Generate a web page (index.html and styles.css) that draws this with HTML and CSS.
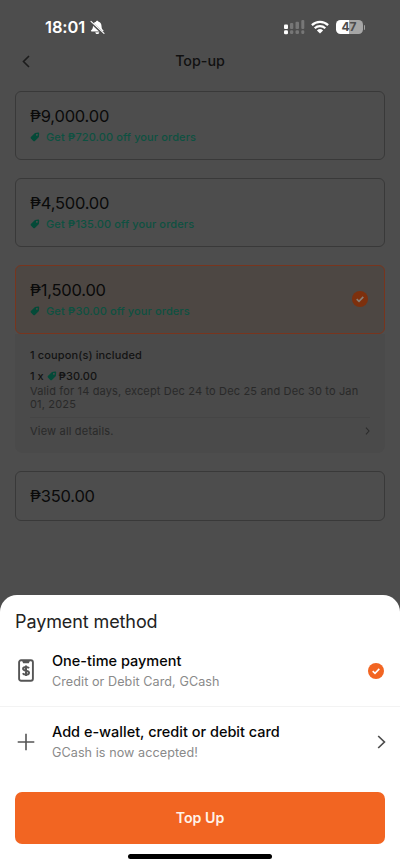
FILE: index.html
```html
<!DOCTYPE html>
<html lang="en">
<head>
<meta charset="utf-8">
<title>Top-up</title>
<link rel="stylesheet" href="styles.css">
</head>
<body>
<svg class="defs" width="0" height="0" aria-hidden="true">
  <symbol id="tag" viewBox="0 0 10 10"><path fill-rule="evenodd" d="M5 .9 8.3.6Q9.2.6 9.2 1.5L8.9 4.9 4.9 9Q4.1 9.7 3.3 9L.9 6.6Q.3 5.9.9 5.1ZM6.9 2a.9.9 0 1 0 .01 0Z"/></symbol>
  <symbol id="check" viewBox="0 0 16 16"><circle cx="8" cy="8" r="8"/><path d="m4.700 8.200 2.300 2.200 4.300-4.500" fill="none" stroke="var(--tick)" stroke-width="1.600"/></symbol>
</svg>
<div class="screen">
  <header class="status">
    <span class="time">18:01</span>
    <svg class="bell" width="15" height="15" viewBox="0 0 15 15"><path fill="#fff" d="M7.2.7c.8 0 1.2.5 1.3 1.1 2 .6 2.9 2 3 4.1.1 2.3.6 3.3 1.8 4.3.5.5.2 1.2-.5 1.2H1.7c-.8 0-1-.7-.5-1.2C2.5 9.100 2.900 8.200 3 5.900c.1-2.100 1-3.500 3-4.100C6 1.200 6.500.7 7.200.7ZM5.300 12.200h4c-.2 1.200-1 1.900-2 1.900s-1.800-.7-2-1.900Z"/><path d="M1 2.300 13.700 14" stroke="#4d4d4d" stroke-width="2.400"/><path d="M1 1.300 14 13.300" stroke="#fff" stroke-width="1.100" stroke-linecap="round"/></svg>
    <svg class="signal" width="21" height="15" viewBox="0 0 21 15"><g fill="#fff"><rect y="4.500" width="4" height="4.500" rx="1"/><rect y="10.300" width="4" height="4" rx="1.300"/></g><g fill="#777"><rect x="6" y="3" width="3.300" height="6" rx="1"/><rect x="11.500" y="1.700" width="3.500" height="7.300" rx="1"/><rect x="17.300" y="0" width="3" height="9" rx="1"/><rect x="6" y="10.300" width="3.300" height="3.700" rx="1.300"/><rect x="11.500" y="10.300" width="3.500" height="3.700" rx="1.300"/><rect x="17.300" y="10.300" width="3" height="3.700" rx="1.300"/></g></svg>
    <svg class="wifi" width="18" height="14" viewBox="0 0 18 14"><g fill="none" stroke="#fff" stroke-width="2.200"><path d="M.9 5.100a11.700 11.700 0 0 1 16.200 0"/><path d="M3.700 8.300a7.700 7.700 0 0 1 10.600 0"/></g><path fill="#fff" d="M5.900 10.400a4.500 4.500 0 0 1 6.200 0L9 13.400Z"/></svg>
    <span class="battery"><span class="cell">47</span><i></i></span>
  </header>
  <nav class="nav">
    <svg class="back" width="8" height="13" viewBox="0 0 8 13"><path d="M7 1 1.500 6.500 7 12" fill="none" stroke="#1c1c1c" stroke-width="1.600"/></svg>
    <h1>Top-up</h1>
  </nav>
  <main class="plans">
    <section class="card"><div class="amount">₱9,000.00</div><div class="offer"><svg class="tag"><use href="#tag"/></svg>Get ₱720.00 off your orders</div></section>
    <section class="card"><div class="amount">₱4,500.00</div><div class="offer"><svg class="tag"><use href="#tag"/></svg>Get ₱135.00 off your orders</div></section>
    <div class="group">
      <section class="card selected"><div><div class="amount">₱1,500.00</div><div class="offer"><svg class="tag"><use href="#tag"/></svg>Get ₱30.00 off your orders</div></div><svg class="check"><use href="#check"/></svg></section>
      <div class="coupon">
        <div class="included">1 coupon(s) included</div>
        <div class="voucher">1 x <svg class="tag"><use href="#tag"/></svg>₱30.00</div>
        <div class="valid">Valid for 14 days, except Dec 24 to Dec 25 and Dec 30 to Jan<br>01, 2025</div>
        <div class="details"><span>View all details.</span><svg width="5" height="8" viewBox="0 0 5 8"><path d="m1 .7 3 3.300-3 3.300" fill="none" stroke="#2b2b2b" stroke-width="1.100"/></svg></div>
      </div>
    </div>
    <section class="card small"><div class="amount">₱350.00</div></section>
  </main>
  <section class="sheet">
    <h2>Payment method</h2>
    <div class="method">
      <svg class="lead" width="16" height="23" viewBox="0 0 16 23"><rect x="1.100" y="1.300" width="13.800" height="20.400" rx="2" fill="none" stroke="#555" stroke-width="1.900"/><path d="M4 1.500h8l-1.200 2.700H5.200Z" fill="#555"/><path d="M11 9.200C10.400 8.300 9.400 8 8 8c-1.800 0-2.900.7-2.900 1.800 0 2.700 5.900 1.100 5.900 3.900 0 1.200-1.200 1.900-3 1.900-1.500 0-2.600-.4-3.200-1.400M8 6.500v10.600" fill="none" stroke="#555" stroke-width="2"/></svg>
      <div class="label"><div class="name">One-time payment</div><div class="note">Credit or Debit Card, GCash</div></div>
      <svg class="check"><use href="#check"/></svg>
    </div>
    <div class="method second">
      <svg class="lead plus" width="18" height="18" viewBox="0 0 18 18"><path d="M9 .7v16.600M.7 9h16.600" stroke="#555" stroke-width="1.600"/></svg>
      <div class="label"><div class="name add">Add e-wallet, credit or debit card</div><div class="note">GCash is now accepted!</div></div>
      <svg class="next" width="9" height="14" viewBox="0 0 9 14"><path d="m1.200 1 6.200 6-6.200 6" fill="none" stroke="#4c4c4c" stroke-width="1.700"/></svg>
    </div>
    <button class="cta">Top Up</button>
    <div class="home"></div>
  </section>
</div>
</body>
</html>
```

FILE: styles.css
```css
* { box-sizing: border-box; }
body { margin: 0; font-family: Inter, "Liberation Sans", sans-serif; }
.defs { position: absolute; }
svg { display: block; flex: none; }
.screen { width: 400px; height: 866px; background: #4d4d4d; display: flex; flex-direction: column; overflow: hidden; }

.status { height: 46px; padding: 17px 34px 9px 45px; display: flex; align-items: center; color: #fff; flex: none; }
.time { font-size: 16.5px; font-weight: 600; letter-spacing: -0.1px; line-height: 20px; width: 45px; white-space: nowrap; }
.signal { margin-left: auto; }
.wifi { margin-left: 6px; }
.battery { margin-left: 7px; display: flex; align-items: center; }
.cell { width: 27px; height: 14px; border-radius: 4.5px; background: linear-gradient(90deg, #fff 47%, #a6a6a6 47%); color: #4d4d4d; font-size: 12px; font-weight: 700; line-height: 14px; text-align: center; }
.battery i { width: 1.5px; height: 5px; margin: 0 1px; border-radius: 0 2px 2px 0; background: #a0a0a0; }

.nav { height: 45px; padding: 0 22px 15px; display: flex; align-items: center; flex: none; }
.nav h1 { margin: 0 auto; padding-right: 8px; font-size: 14.3px; line-height: 18px; font-weight: 500; color: #111; }

.plans { padding: 0 15px; display: flex; flex-direction: column; gap: 18px; flex: none; height: 504px; }
.card { height: 69px; border: 1px solid #393939; border-radius: 6px; padding: 12px 14px 0; flex: none; }
.card.small { height: 50px; }
.amount { font-size: 16.5px; line-height: 24px; font-weight: 400; letter-spacing: -0.22px; color: #0a0a0a; white-space: nowrap; }
.offer { margin-top: 1px; display: flex; align-items: center; font-size: 11px; line-height: 16px; font-weight: 500; letter-spacing: 0.11px; color: #0d5141; white-space: nowrap; }
.tag { width: 10px; height: 10px; fill: #044a38; }
.offer .tag { margin: 0 6px 0 0; }
.selected { background: #4d4743; border-color: #78351e; display: flex; justify-content: space-between; }
.check { width: 16px; height: 16px; fill: #f26522; --tick: #fff; }
.selected .check { margin: 13px 2px 0 0; fill: #7d300d; --tick: #888078; }
.coupon { height: 119px; padding: 12px 15px 0; background: #4a4a4a; border-radius: 0 0 8px 8px; font-size: 11px; line-height: 18px; font-weight: 500; color: #131313; }
.voucher { display: flex; align-items: center; margin-top: 3px; line-height: 18px; white-space: pre; }
.voucher .tag { margin: 0 2px 0 0; }
.included { letter-spacing: 0.13px; }
.valid { color: #292929; line-height: 13px; font-weight: 400; letter-spacing: 0.16px; white-space: nowrap; }
.details { margin-top: 6px; border-top: 1px solid #454545; height: 27px; display: flex; align-items: center; justify-content: space-between; color: #292929; font-weight: 400; letter-spacing: 0.19px; }

.sheet { height: 271px; background: #fff; border-radius: 17px 17px 0 0; display: flex; flex-direction: column; flex: none; padding-top: 14px; }
.sheet h2 { margin: 0; padding-left: 15px; font-size: 18px; line-height: 25px; font-weight: 400; letter-spacing: -0.1px; color: #222; }
.method { height: 73px; display: flex; align-items: center; padding: 1px 16px 0 18px; border-bottom: 1px solid #f3f3f3; }
.method.second { height: 71px; border: 0; padding: 0 14px 1px 17px; }
.label { margin-left: 18px; flex: 1; white-space: nowrap; }
.second .label { margin-left: 17px; }
.name { font-size: 14.5px; line-height: 21px; font-weight: 500; color: #050505; }
.add { letter-spacing: -0.01px; }
.note { font-size: 12.6px; line-height: 21px; letter-spacing: 0.07px; color: #8a8a8a; }
.cta { margin: 14px 15px 0; height: 52px; border: 0; border-radius: 7px; background: #f26522; color: #fff3e8; font: 600 14.2px Inter, sans-serif; padding: 0 0 1px; flex: none; }
.home { width: 144px; height: 5px; margin: 10px auto 0; border-radius: 3px; background: #000; }
```
